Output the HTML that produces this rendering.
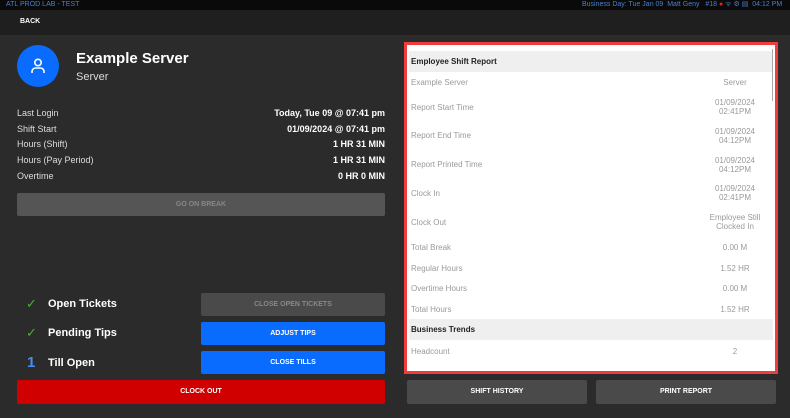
<!DOCTYPE html>
<html><head><style>
*{margin:0;padding:0;box-sizing:border-box}
body{width:790px;height:418px;background:#2b2b2b;font-family:"Liberation Sans",sans-serif;position:relative;overflow:hidden;color:#eee}
.a{position:absolute}
.top{left:0;top:0;width:790px;height:10px;background:#0a0a0a;font-size:7px;color:#4a7fd0;line-height:10px}
.nav{left:0;top:10px;width:790px;height:25px;background:#1f1f1f}
.lbl{left:17px;font-size:9px;color:#ddd}
.val{right:405px;font-size:9px;font-weight:bold;color:#fff;text-align:right}
.btn{font-size:7px;font-weight:bold;text-align:center;border-radius:2px;color:#fff}
.rl{left:411px;font-size:8px;color:#9a9a9a}
.rv{width:80px;left:695px;font-size:8px;color:#9a9a9a;text-align:center;line-height:9px}
.chk{left:26px;color:#4caf3a;font-size:13px}
.st{left:48px;font-size:11px;font-weight:bold;color:#fff}
</style></head><body>
<div class="a top"><span style="margin-left:6px">ATL PROD LAB - TEST</span><span style="position:absolute;left:582px">Business Day: Tue Jan 09 &nbsp;Matt Geny &nbsp; #18 <span style="color:#d22">●</span> ᯤ ⚙ ▤ &nbsp;04:12 PM</span></div>
<div class="a nav"><span class="a" style="left:20px;top:8px;font-size:7px;font-weight:bold;color:#fff">BACK</span></div>
<div class="a" style="left:17px;top:45px;width:42px;height:42px;border-radius:50%;background:#0a6cff"></div>
<svg class="a" style="left:28px;top:56px" width="20" height="20" viewBox="0 0 20 20" fill="none" stroke="#fff" stroke-width="1.6"><circle cx="10" cy="6.5" r="3.2"/><path d="M4 17v-1.5a3.5 3.5 0 0 1 3.5-3.5h5a3.5 3.5 0 0 1 3.5 3.5V17"/></svg>
<div class="a" style="left:76px;top:50px;font-size:15px;font-weight:bold;color:#fff">Example Server</div>
<div class="a" style="left:76px;top:71px;font-size:11px;color:#ddd">Server</div>
<div class="a lbl" style="top:108px">Last Login</div><div class="a val" style="top:108px">Today, Tue 09 @ 07:41 pm</div>
<div class="a lbl" style="top:124px">Shift Start</div><div class="a val" style="top:124px">01/09/2024 @ 07:41 pm</div>
<div class="a lbl" style="top:139px">Hours (Shift)</div><div class="a val" style="top:139px">1 HR 31 MIN</div>
<div class="a lbl" style="top:155px">Hours (Pay Period)</div><div class="a val" style="top:155px">1 HR 31 MIN</div>
<div class="a lbl" style="top:171px">Overtime</div><div class="a val" style="top:171px">0 HR 0 MIN</div>
<div class="a btn" style="left:17px;top:193px;width:368px;height:23px;line-height:23px;background:#555;color:#888">GO ON BREAK</div>
<div class="a chk" style="top:296px">✓</div><div class="a st" style="top:298px">Open Tickets</div>
<div class="a chk" style="top:325px">✓</div><div class="a st" style="top:327px">Pending Tips</div>
<div class="a" style="left:27px;top:354px;font-size:15px;font-weight:bold;color:#4a8cf0">1</div><div class="a st" style="top:357px">Till Open</div>
<div class="a btn" style="left:201px;top:293px;width:184px;height:23px;line-height:23px;background:#4a4a4a;color:#888">CLOSE OPEN TICKETS</div>
<div class="a btn" style="left:201px;top:322px;width:184px;height:23px;line-height:23px;background:#0a6cff">ADJUST TIPS</div>
<div class="a btn" style="left:201px;top:351px;width:184px;height:23px;line-height:23px;background:#0a6cff">CLOSE TILLS</div>
<div class="a btn" style="left:17px;top:380px;width:368px;height:24px;line-height:24px;background:#d00000">CLOCK OUT</div>
<div class="a" style="left:404px;top:42px;width:374px;height:332px;border:3px solid #f03c3c;background:#fff"></div>
<div class="a" style="left:409px;top:51px;width:364px;height:21px;background:#efefef"></div>
<div class="a" style="left:409px;top:319px;width:364px;height:21px;background:#efefef"></div>
<div class="a" style="left:772px;top:49px;width:1px;height:52px;background:#aaa"></div>
<div class="a" style="left:411px;top:57px;font-size:8px;font-weight:bold;color:#222">Employee Shift Report</div>
<div class="a" style="left:411px;top:325px;font-size:8px;font-weight:bold;color:#222">Business Trends</div>
<div class="a rl" style="top:78px">Example Server</div><div class="a rv" style="top:78px">Server</div>
<div class="a rl" style="top:103px">Report Start Time</div><div class="a rv" style="top:98px">01/09/2024<br>02:41PM</div>
<div class="a rl" style="top:131px">Report End Time</div><div class="a rv" style="top:127px">01/09/2024<br>04:12PM</div>
<div class="a rl" style="top:160px">Report Printed Time</div><div class="a rv" style="top:156px">01/09/2024<br>04:12PM</div>
<div class="a rl" style="top:189px">Clock In</div><div class="a rv" style="top:184px">01/09/2024<br>02:41PM</div>
<div class="a rl" style="top:218px">Clock Out</div><div class="a rv" style="top:213px">Employee Still<br>Clocked In</div>
<div class="a rl" style="top:243px">Total Break</div><div class="a rv" style="top:243px">0.00 M</div>
<div class="a rl" style="top:264px">Regular Hours</div><div class="a rv" style="top:264px">1.52 HR</div>
<div class="a rl" style="top:284px">Overtime Hours</div><div class="a rv" style="top:284px">0.00 M</div>
<div class="a rl" style="top:305px">Total Hours</div><div class="a rv" style="top:305px">1.52 HR</div>
<div class="a rl" style="top:347px">Headcount</div><div class="a rv" style="top:347px">2</div>
<div class="a btn" style="left:407px;top:380px;width:180px;height:24px;line-height:24px;background:#4a4a4a">SHIFT HISTORY</div>
<div class="a btn" style="left:596px;top:380px;width:180px;height:24px;line-height:24px;background:#4a4a4a">PRINT REPORT</div>
</body></html>
